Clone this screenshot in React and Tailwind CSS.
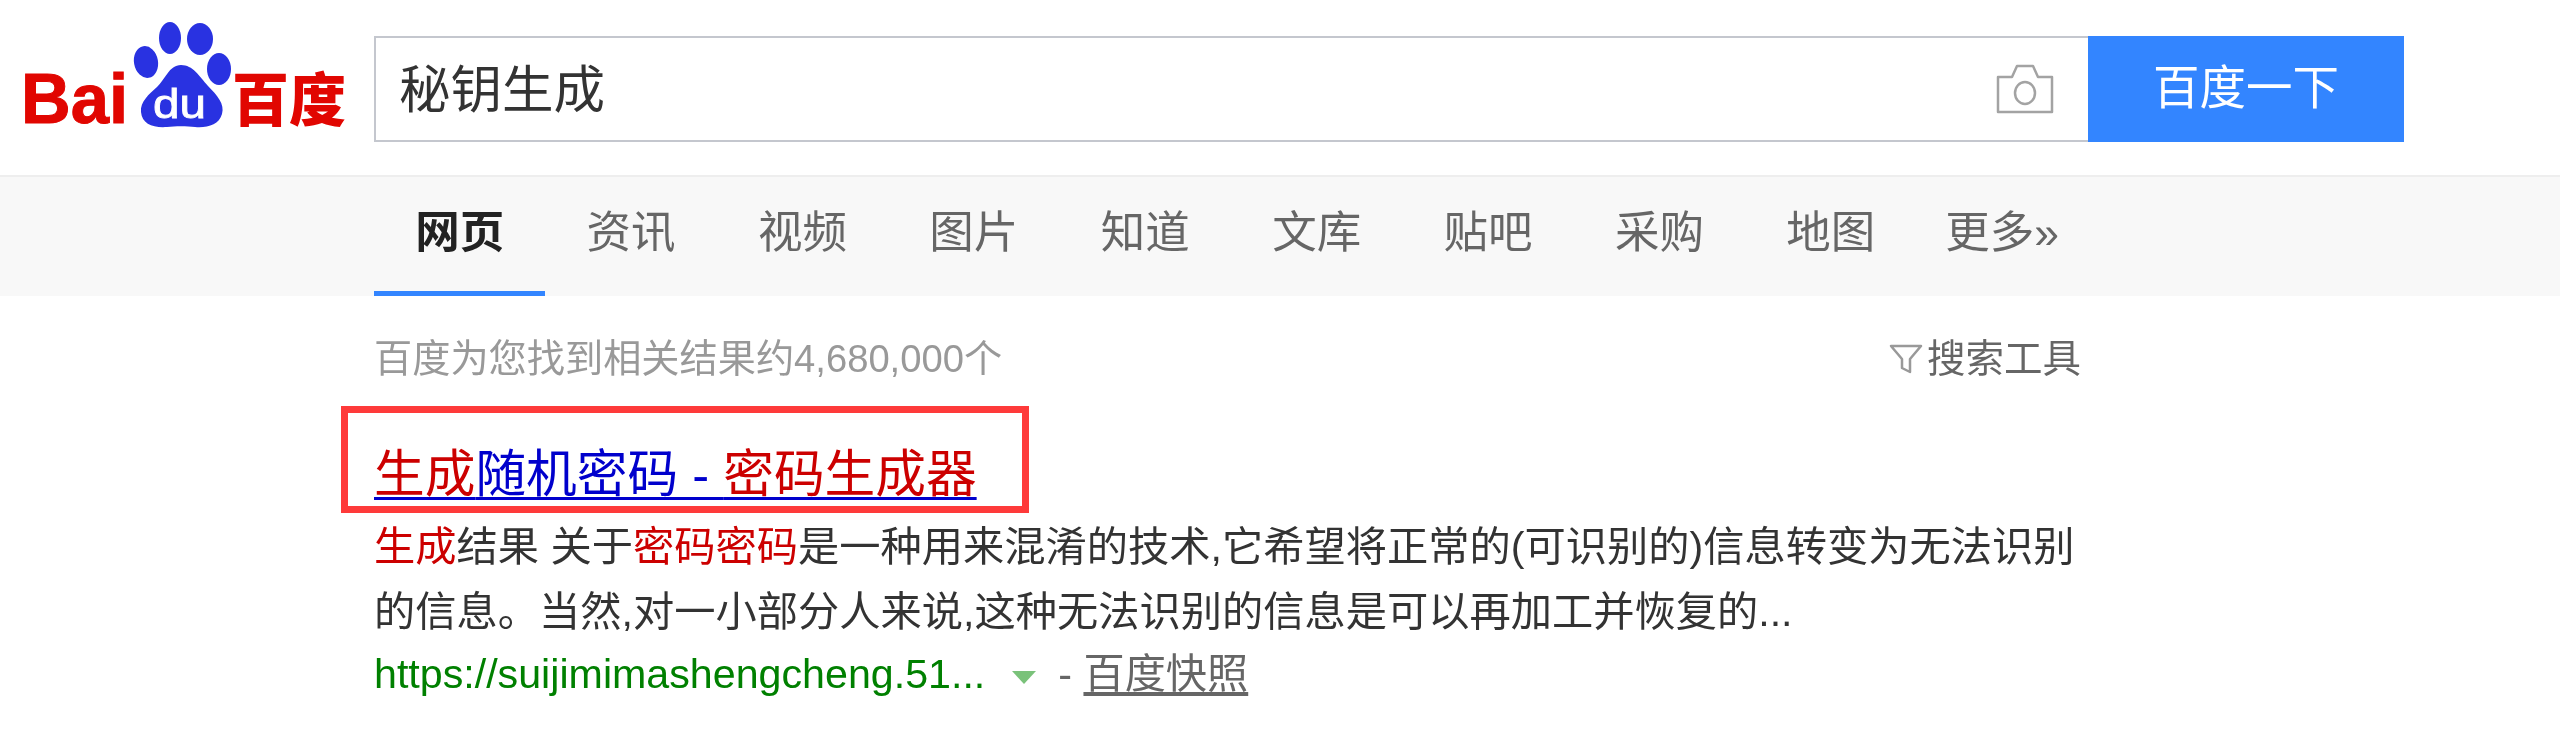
const cjk = "font-['Liberation_Sans','Noto_Sans_CJK_SC',sans-serif]";

const tabs = ["网页", "资讯", "视频", "图片", "知道", "文库", "贴吧", "采购", "地图", "更多»"];

function Logo() {
  return (
    <svg width="374" height="175" viewBox="0 0 374 175" className="shrink-0">
      <text x="21" y="123" fontFamily="Liberation Sans" fontWeight="700" fontSize="71" fill="#e10601" stroke="#e10601" strokeWidth="1" textLength="107" lengthAdjust="spacingAndGlyphs">Bai</text>
      {/* paw */}
      <g fill="#2932e1" transform="translate(3 0)">
        <ellipse cx="143" cy="62" rx="12" ry="16" transform="rotate(-10 143 62)" />
        <ellipse cx="167" cy="38" rx="11" ry="16" />
        <ellipse cx="197" cy="39" rx="13" ry="16" />
        <ellipse cx="216" cy="69" rx="12" ry="16" />
        <path d="M178 65 C190 65 196 76 205 86 C214 95 222 104 219 114 C216 125 204 128 192 127 C184 126 172 126 164 127 C150 128 139 124 138 112 C137 102 146 94 154 87 C162 80 166 65 178 65 Z" />
      </g>
      <text x="153" y="118" fontFamily="Liberation Sans" fontSize="41" fill="#fff" stroke="#fff" strokeWidth="0.8" textLength="53" lengthAdjust="spacingAndGlyphs">du</text>
      <text x="232" y="121" fontFamily="Noto Sans CJK SC" fontWeight="900" fontSize="58" fill="#e10601" textLength="114" lengthAdjust="spacingAndGlyphs">百度</text>
    </svg>
  );
}

function Camera() {
  return (
    <svg width="58" height="50" viewBox="0 0 58 50" fill="none" stroke="#a3a3a3" strokeWidth="2.5">
      <path d="M2 13 H16 L21 2 H37 L42 13 H56 V48 H2 Z" strokeLinejoin="round" />
      <ellipse cx="29" cy="29" rx="10" ry="11" />
    </svg>
  );
}

export default function App() {
  return (
    <div className={`w-[2560px] h-[742px] bg-white overflow-hidden blur-[0.6px] ${cjk}`}>
      {/* search row */}
      <div className="h-[175px] flex items-start">
        <Logo />
        <div className="mt-[36px] h-[106px] w-[1714px] flex items-center border-2 border-[#c4c7ce] border-r-0 pl-[23px] pr-[34px]">
          <span className="flex-1 text-[51.5px] text-[#333] pt-[4px]">秘钥生成</span>
          <Camera />
        </div>
        <div className="mt-[36px] h-[106px] w-[316px] bg-[#3385ff] text-white text-[46.5px] flex items-center justify-center">
          百度一下
        </div>
      </div>

      {/* tabs */}
      <div className="h-[121px] bg-[#f8f8f8] border-t-2 border-[#eee] pl-[374px] flex">
        {tabs.map((t, i) => (
          <div
            key={t}
            className={`w-[171.4px] flex items-center justify-center text-[44.5px] pb-[2px] border-b-[5px] ${
              i === 0 ? "font-bold text-[#222] border-[#3385ff]" : "text-[#666] border-transparent"
            }`}
          >
            {t}
          </div>
        ))}
      </div>

      {/* results */}
      <div className="pl-[374px] w-[2081px]">
        <div className="pt-[40px] h-[137px] flex items-start justify-between leading-[46px]">
          <span className="text-[38.2px] text-[#999]">百度为您找到相关结果约4,680,000个</span>
          <span className="flex items-center gap-[4px] text-[38.5px] text-[#666]">
            <svg width="34" height="32" viewBox="0 0 34 32" fill="none" stroke="#999" strokeWidth="2.5">
              <path d="M2 3 H32 L21 16 V29 L13 25 V16 Z" strokeLinejoin="round" />
            </svg>
            搜索工具
          </span>
        </div>

        <div className="relative h-[72px] flex items-end">
          <a className="text-[50.7px] leading-[60px] text-[#00c] underline decoration-[3px] underline-offset-[5px] whitespace-nowrap">
            <span className="text-[#c00]">生成</span>随机密码 - <span className="text-[#c00]">密码生成器</span>
          </a>
          <div className="absolute left-[-33px] top-[-27px] w-[688px] h-[107px] border-[7px] border-[#fe3a3a]" />
        </div>

        <div className="text-[41.25px] leading-[65px] text-[#333] mt-[10px] whitespace-nowrap">
          <div><span className="text-[#c00]">生成</span>结果 关于<span className="text-[#c00]">密码密码</span>是一种用来混淆的技术,它希望将正常的(可识别的)信息转变为无法识别</div>
          <div>的信息。当然,对一小部分人来说,这种无法识别的信息是可以再加工并恢复的...</div>
        </div>

        <div className="flex items-center text-[41.2px] leading-[60px] mt-[-1px] whitespace-nowrap">
          <span className="text-[#008000]">https://suijimimashengcheng.51...</span>
          <span className="ml-[27px] w-0 h-0 border-x-[12px] border-x-transparent border-t-[13px] border-t-[#7ac27a] mt-[6px]" />
          <span className="ml-[22px] text-[#666]">- <span className="underline underline-offset-4 text-[#666]">百度快照</span></span>
        </div>
      </div>
    </div>
  );
}
